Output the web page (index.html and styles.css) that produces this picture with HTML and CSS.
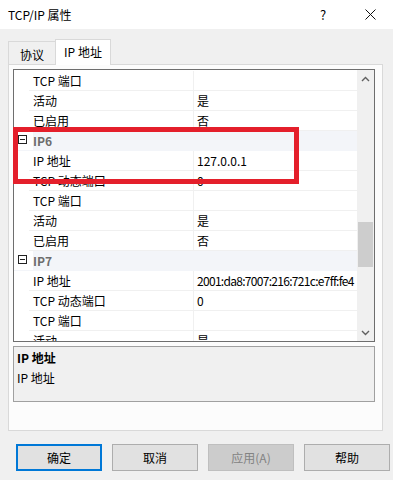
FILE: index.html
```html
<!DOCTYPE html>
<html lang="zh-CN">

<head>
    <meta charset="UTF-8" />
    <title>TCP/IP 属性</title>
    <link rel="stylesheet" href="styles.css">
</head>

<body>
    <div class="window">
        <div class="titlebar">
            <span class="title">TCP/IP 属性</span>
            <span class="help-btn">?</span>
            <span class="close-btn">
                <svg width="11" height="11" viewBox="0 0 11 11">
                    <path d="M0.5 0.5 L10.5 10.5 M10.5 0.5 L0.5 10.5" stroke="#111" stroke-width="1" fill="none" />
                </svg>
            </span>
        </div>

        <div class="tabs">
            <div class="tab">协议</div>
            <div class="tab selected">IP 地址</div>
        </div>

        <div class="panel">
            <div class="grid">
                <div class="rows">
                    <div class="row"><span class="name">TCP 端口</span><span class="value"></span></div>
                    <div class="row"><span class="name">活动</span><span class="value">是</span></div>
                    <div class="row"><span class="name">已启用</span><span class="value">否</span></div>
                    <div class="row category">
                        <span class="toggle"><svg width="9" height="9" viewBox="0 0 9 9"><rect x="0.5" y="0.5" width="8" height="8" fill="#fff" stroke="#222" /><path d="M2 4.5 H7" stroke="#222" /></svg></span>
                        <span class="cat-name">IP6</span>
                    </div>
                    <div class="row"><span class="name">IP 地址</span><span class="value">127.0.0.1</span></div>
                    <div class="row"><span class="name">TCP 动态端口</span><span class="value">0</span></div>
                    <div class="row"><span class="name">TCP 端口</span><span class="value"></span></div>
                    <div class="row"><span class="name">活动</span><span class="value">是</span></div>
                    <div class="row"><span class="name">已启用</span><span class="value">否</span></div>
                    <div class="row category">
                        <span class="toggle"><svg width="9" height="9" viewBox="0 0 9 9"><rect x="0.5" y="0.5" width="8" height="8" fill="#fff" stroke="#222" /><path d="M2 4.5 H7" stroke="#222" /></svg></span>
                        <span class="cat-name">IP7</span>
                    </div>
                    <div class="row"><span class="name">IP 地址</span><span class="value long">2001:da8:7007:216:721c:e7ff:fe4</span></div>
                    <div class="row"><span class="name">TCP 动态端口</span><span class="value">0</span></div>
                    <div class="row"><span class="name">TCP 端口</span><span class="value"></span></div>
                    <div class="row"><span class="name">活动</span><span class="value">是</span></div>
                </div>
                <div class="scrollbar">
                    <span class="arrow">
                        <svg width="9" height="6" viewBox="0 0 9 6"><path d="M1 5 L4.5 1.5 L8 5" stroke="#606060" stroke-width="1.4" fill="none" /></svg>
                    </span>
                    <div class="track">
                        <div class="thumb"></div>
                    </div>
                    <span class="arrow">
                        <svg width="9" height="6" viewBox="0 0 9 6"><path d="M1 1 L4.5 4.5 L8 1" stroke="#606060" stroke-width="1.4" fill="none" /></svg>
                    </span>
                </div>
            </div>

            <div class="desc">
                <div class="desc-title">IP 地址</div>
                <div class="desc-text">IP 地址</div>
            </div>
        </div>

        <div class="buttons">
            <button class="btn default">确定</button>
            <button class="btn">取消</button>
            <button class="btn disabled">应用(A)</button>
            <button class="btn">帮助</button>
        </div>

        <!-- highlight around IP6 -->
        <div class="highlight"></div>
    </div>
</body>

</html>
```

FILE: styles.css
```css
* {
    box-sizing: border-box;
    margin: 0;
    padding: 0;
    font-family: "Noto Sans CJK SC", "Noto Sans", sans-serif;
}

body {
    width: 393px;
    height: 480px;
    background: #f0f0f0;
    font-size: 12px;
    color: #000;
    overflow: hidden;
}

.window {
    position: relative;
    height: 480px;
}

.titlebar {
    height: 29px;
    background: #fff;
    display: flex;
    align-items: center;
    padding-left: 8px;
}

.title {
    flex: 1;
    font-size: 12px;
}

.help-btn {
    width: 46px;
    text-align: center;
    font-size: 13px;
    margin-right: 1px;
}

.close-btn {
    width: 46px;
    display: flex;
    justify-content: center;
}

.tabs {
    display: flex;
    align-items: flex-end;
    padding-left: 8px;
    margin-top: 9px;
    height: 26px;
    position: relative;
    z-index: 1;
}

.tab {
    height: 23px;
    width: 48px;
    border: 1px solid #d9d9d9;
    border-bottom: none;
    display: flex;
    align-items: center;
    justify-content: center;
    padding-top: 2px;
}

.tab.selected {
    height: 26px;
    width: 56px;
    margin-left: -1px;
    background: #fff;
    margin-bottom: -1px;
    padding-top: 0;
    padding-bottom: 2px;
}

.panel {
    margin: 0 10px 0 8px;
    height: 367px;
    background: #fcfcfc;
    border: 1px solid #d9d9d9;
    padding: 4px 7px 0 4px;
}

.grid {
    height: 273px;
    border: 1px solid #6e6e6e;
    display: flex;
    background: #fff;
    overflow: hidden;
}

.rows {
    flex: 1;
    overflow: hidden;
    padding-top: 1px;
}

.row {
    height: 20px;
    display: flex;
    align-items: center;
    border-bottom: 1px solid #f0f0f0;
    margin-left: 15px;
}

.row .name {
    width: 165px;
    height: 100%;
    display: flex;
    align-items: center;
    padding-left: 4px;
    border-right: 1px solid #f0f0f0;
}

.row .value {
    flex: 1;
    padding-left: 3px;
    white-space: nowrap;
    overflow: hidden;
}

.row .value.long {
    letter-spacing: -0.7px;
}

.row.category {
    margin-left: 0;
    background: #f3f5f9;
    border-bottom-color: #f3f5f9;
}

.toggle {
    width: 19px;
    height: 100%;
    display: flex;
    padding: 4px 0 0 4px;
    background: #fff;
}

.cat-name {
    font-weight: bold;
    color: #6d6d6d;
    padding-left: 0;
}

.scrollbar {
    width: 17px;
    background: #f0f0f0;
    display: flex;
    flex-direction: column;
}

.arrow {
    height: 17px;
    display: flex;
    align-items: center;
    justify-content: center;
}

.track {
    flex: 1;
    padding-top: 135px;
}

.thumb {
    height: 45px;
    margin: 0 1px;
    background: #cdcdcd;
}

.desc {
    margin-top: 4px;
    height: 56px;
    border: 1px solid #a0a0a0;
    background: #f0f0f0;
    padding: 2px 3px;
}

.desc-title {
    font-weight: bold;
    line-height: 18px;
}

.desc-text {
    line-height: 18px;
    margin-top: 2px;
}

.buttons {
    display: flex;
    gap: 10px;
    padding-left: 16px;
    margin-top: 13px;
}

.btn {
    width: 86px;
    height: 27px;
    background: #e1e1e1;
    border: 1px solid #adadad;
    font-size: 12px;
    color: #000;
}

.btn.default {
    border: 2px solid #0078d7;
}

.btn.disabled {
    background: #cccccc;
    border-color: #bfbfbf;
    color: #838383;
}

.highlight {
    position: absolute;
    left: 13px;
    top: 127px;
    width: 286px;
    height: 57px;
    border: 5px solid #e41f2b;
}
```
